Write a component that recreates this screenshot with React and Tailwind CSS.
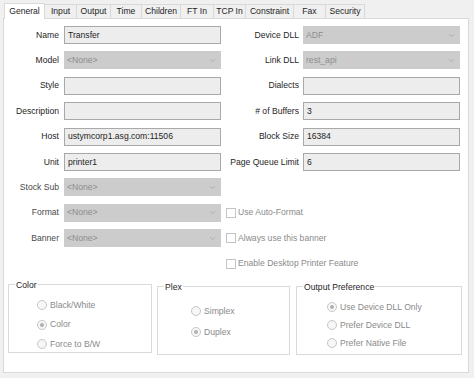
import { ChevronDown } from 'lucide-react';

const tabs = [
  { label: 'General', w: 41 },
  { label: 'Input', w: 32 },
  { label: 'Output', w: 34 },
  { label: 'Time', w: 31 },
  { label: 'Children', w: 39 },
  { label: 'FT In', w: 33 },
  { label: 'TCP In', w: 32 },
  { label: 'Constraint', w: 48 },
  { label: 'Fax', w: 32 },
  { label: 'Security', w: 39 },
];

function Field({ value = '' }) {
  return (
    <div className="flex h-[18px] w-[157px] items-center border border-[#a9a9a9] bg-[#ededed] pl-[3px] text-[#1e1e1e]">
      {value}
    </div>
  );
}

function Combo({ value }) {
  return (
    <div className="flex h-[18px] w-[157px] items-center justify-between bg-[#cccccc] pl-[3px] pr-[4px] text-[#8c8c8c]">
      <span>{value}</span>
      <ChevronDown className="h-[9px] w-[9px] text-[#a3a3a3]" strokeWidth={2} />
    </div>
  );
}

function Label({ children, w, muted }) {
  return (
    <div className={`shrink-0 text-right ${muted ? 'text-[#4a4a4a]' : 'text-[#1e1e1e]'}`} style={{ width: w }}>
      {children}
    </div>
  );
}

function Check({ label }) {
  return (
    <div className="flex items-center gap-[2px] pl-[2px] text-[#8a8a8a]">
      <span className="h-[10px] w-[10px] border border-[#c4c4c4] bg-white" />
      <span>{label}</span>
    </div>
  );
}

function Radio({ label, on }) {
  return (
    <div className="flex items-center gap-[3px] text-[#8a8a8a]">
      <span className="flex h-[10px] w-[10px] items-center justify-center rounded-full border border-[#c6c6c6] bg-[#f7f7f7]">
        {on && <span className="h-[4px] w-[4px] rounded-full bg-[#b0b0b0]" />}
      </span>
      <span>{label}</span>
    </div>
  );
}

function Group({ title, className, children }) {
  return (
    <fieldset className={`border border-[#dadada] ${className}`}>
      <legend className="ml-[6px] px-[1px] text-[#1e1e1e]">{title}</legend>
      {children}
    </fieldset>
  );
}

const rows = [
  { left: ['Name', <Field value="Transfer" />], right: ['Device DLL', <Combo value="ADF" />] },
  { left: ['Model', <Combo value="<None>" />], right: ['Link DLL', <Combo value="rest_api" />] },
  { left: ['Style', <Field />], right: ['Dialects', <Field />] },
  { left: ['Description', <Field />], right: ['# of Buffers', <Field value="3" />] },
  { left: ['Host', <Field value="ustymcorp1.asg.com:11506" />], right: ['Block Size', <Field value="16384" />] },
  { left: ['Unit', <Field value="printer1" />], right: ['Page Queue Limit', <Field value="6" />] },
  { left: ['Stock Sub', <Combo value="<None>" />, true] },
  { left: ['Format', <Combo value="<None>" />, true], check: 'Use Auto-Format' },
  { left: ['Banner', <Combo value="<None>" />, true], check: 'Always use this banner' },
  { check: 'Enable Desktop Printer Feature' },
];

export default function App() {
  return (
    <div
      className="h-[378px] w-[474px] overflow-hidden bg-[#f0f0f0] text-[8.6px] leading-none"
      style={{ fontFamily: '"Liberation Sans", Arial, sans-serif' }}
    >
      <div className="flex h-[18px] items-end pl-[4px]">
        {tabs.map(({ label, w }, i) => (
          <div
            key={label}
            className={
              i === 0
                ? 'relative -mb-px flex h-[16px] items-center justify-center border border-b-0 border-[#d9d9d9] bg-white text-[#1e1e1e]'
                : 'flex h-[14px] items-center justify-center border border-l-0 border-b-0 border-[#d9d9d9] bg-[#f0f0f0] text-[#1e1e1e]'
            }
            style={{ width: w }}
          >
            {label}
          </div>
        ))}
      </div>

      <div className="ml-[3px] h-[355px] w-[466px] border border-[#d9d9d9] bg-white">
        <div className="flex flex-col gap-[7.4px] pt-[7px]">
          {rows.map((row, i) => (
            <div key={i} className="flex h-[18px] items-center">
              <div className="flex w-[220px] items-center gap-[5px]">
                {row.left && (
                  <>
                    <Label w={55} muted={row.left[2]}>
                      {row.left[0]}
                    </Label>
                    {row.left[1]}
                  </>
                )}
              </div>
              {row.right && (
                <div className="flex items-center gap-[4px]">
                  <Label w={75}>{row.right[0]}</Label>
                  {row.right[1]}
                </div>
              )}
              {row.check && <Check label={row.check} />}
            </div>
          ))}
        </div>

        <div className="mt-[8px] flex items-start pl-[4px]">
          <Group title="Color" className="h-[72px] w-[144px]">
            <div className="flex flex-col gap-[9.5px] pl-[28px] pt-[11px]">
              <Radio label="Black/White" />
              <Radio label="Color" on />
              <Radio label="Force to B/W" />
            </div>
          </Group>
          <Group title="Plex" className="ml-[5px] mt-[2px] h-[72px] w-[133px]">
            <div className="flex flex-col gap-[11px] pl-[33px] pt-[15px]">
              <Radio label="Simplex" />
              <Radio label="Duplex" on />
            </div>
          </Group>
          <Group title="Output Preference" className="ml-[6px] mt-[2px] h-[72px] w-[166px]">
            <div className="flex flex-col gap-[8px] pl-[30px] pt-[11px]">
              <Radio label="Use Device DLL Only" on />
              <Radio label="Prefer Device DLL" />
              <Radio label="Prefer Native File" />
            </div>
          </Group>
        </div>
      </div>
    </div>
  );
}
